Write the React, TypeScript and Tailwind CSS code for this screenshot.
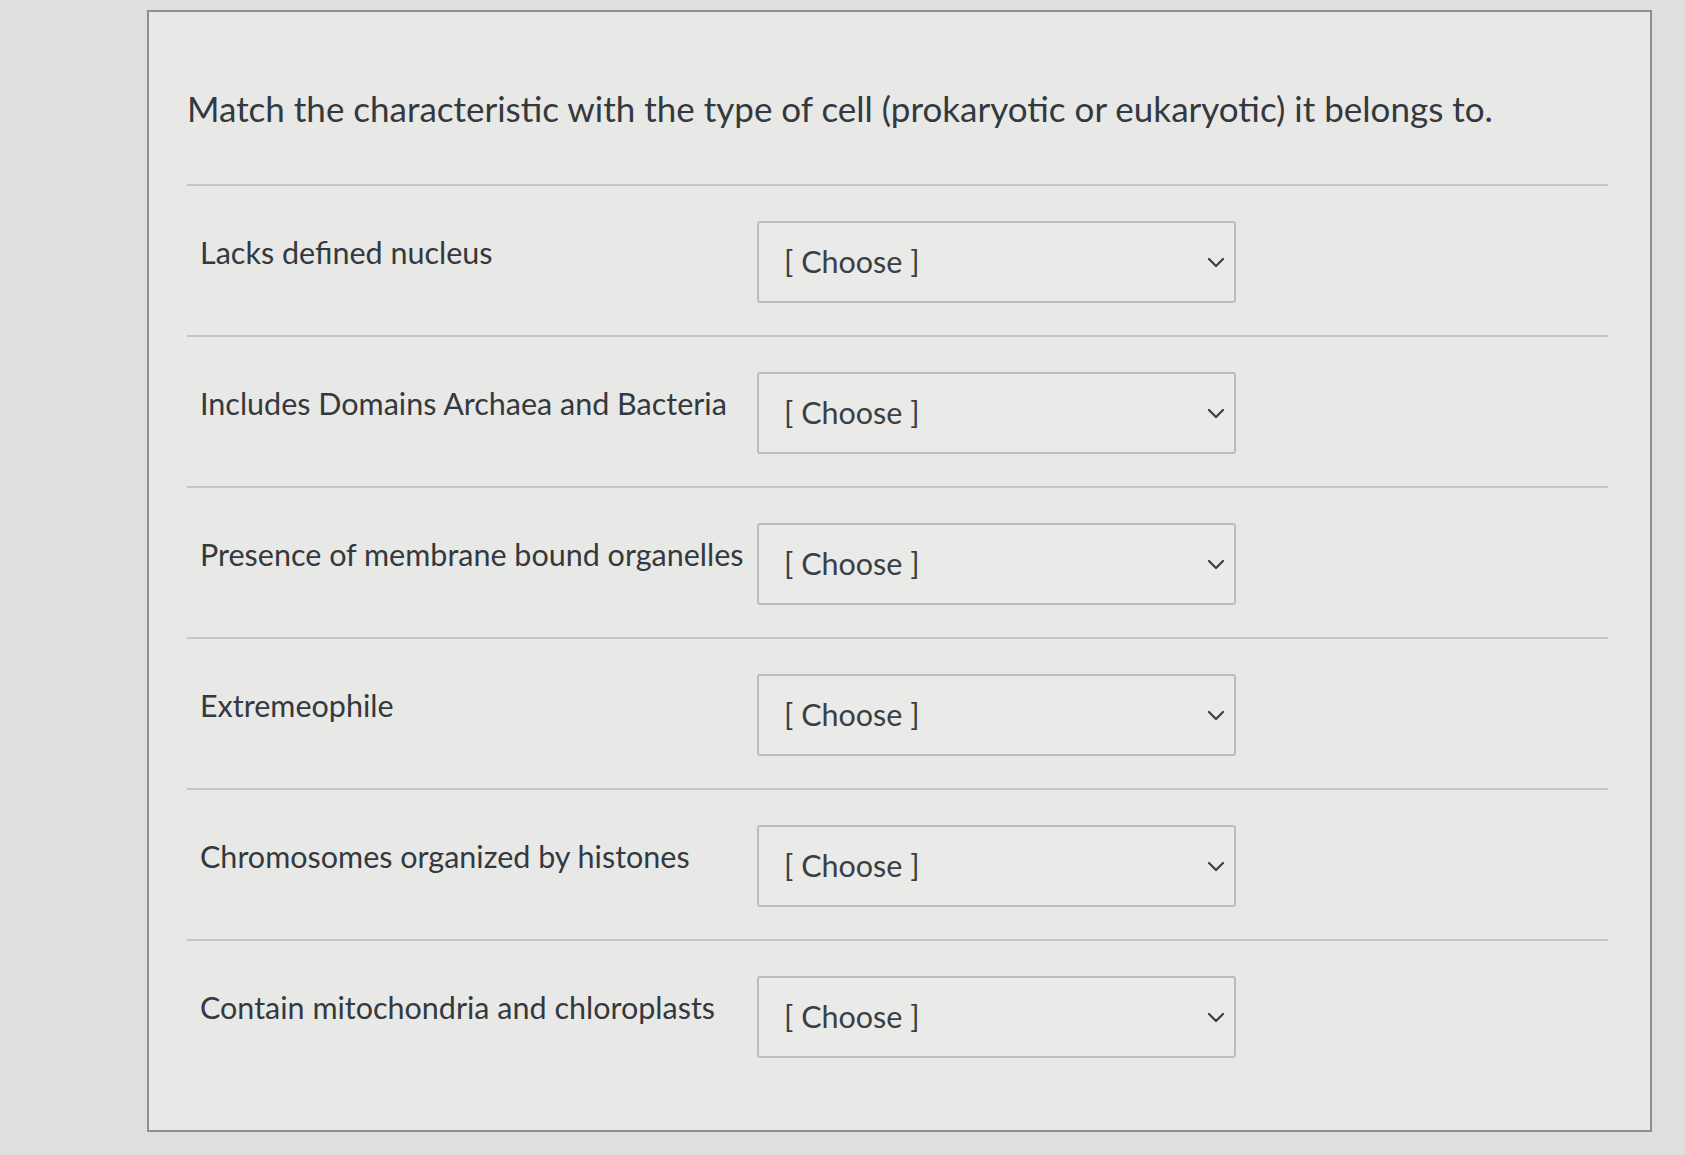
const ROWS = [
  'Lacks defined nucleus',
  'Includes Domains Archaea and Bacteria',
  'Presence of membrane bound organelles',
  'Extremeophile',
  'Chromosomes organized by histones',
  'Contain mitochondria and chloroplasts',
]

function ChooseBox() {
  return (
    <div className="flex h-[82px] w-[479px] items-center justify-between rounded-[3px] border-2 border-[#bdbdbb] bg-[#eaeae8] pl-[25px] pr-[9px]">
      <span className="text-[30.5px] text-[#3a3f44]">[ Choose ]</span>
      <svg width="18" height="12" viewBox="0 0 18 12" fill="none">
        <polyline points="2,3 9,10 16,3" stroke="#3a3f44" strokeWidth="2.2" strokeLinecap="round" strokeLinejoin="round" />
      </svg>
    </div>
  )
}

export default function App() {
  return (
    <div className="min-h-[1155px] w-full bg-[#dfdfdd] pt-[10px] pl-[147px] font-['Lato','Open_Sans',sans-serif]">
      <div className="h-[1122px] w-[1505px] border-2 border-[#8e8e8c] bg-[#e8e8e6] pl-[38px] pr-[42px] pt-[74px]">
        <h1 className="text-[35px] leading-[44px] text-[#33393e]">
          Match the characteristic with the type of cell (prokaryotic or eukaryotic) it belongs to.
        </h1>
        <div className="mt-[54px]">
          {ROWS.map((label) => (
            <div key={label} className="flex h-[151px] border-t-2 border-[#c6c6c4] pt-[35px]">
              <div className="w-[570px] pl-[13px] pt-[13px] text-[30.5px] leading-[36px] text-[#33393e]">
                {label}
              </div>
              <ChooseBox />
            </div>
          ))}
        </div>
      </div>
    </div>
  )
}
